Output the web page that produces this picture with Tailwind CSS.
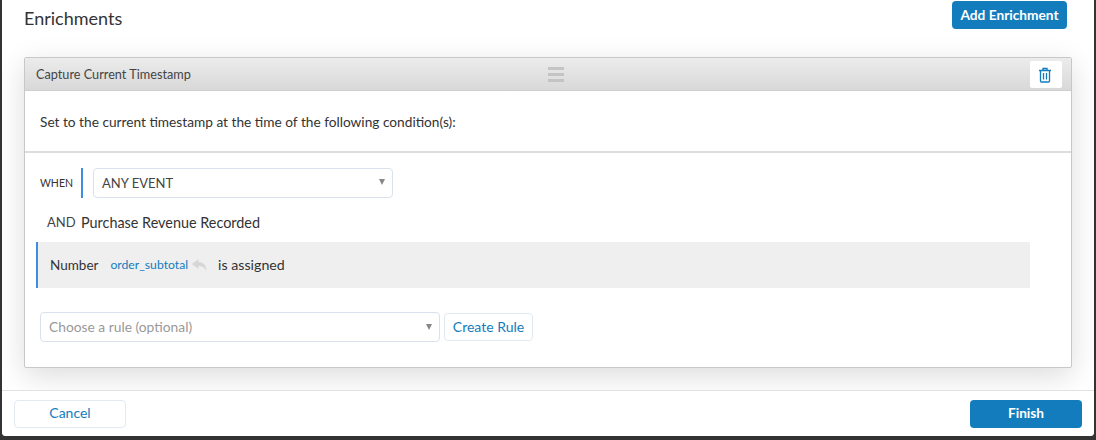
<!DOCTYPE html>
<html lang="en">
<head>
    <meta charset="UTF-8">
    <title>Enrichments</title>
    <script src="https://cdn.jsdelivr.net/npm/@tailwindcss/browser@4"></script>
</head>
<body class="w-[1096px] h-[440px] overflow-hidden bg-[#333333] font-['Lato','Liberation_Sans',sans-serif] text-[#333333]">
    <div class="ml-[2px] w-[1092px] h-[436px] bg-white rounded-b-[4px] flex flex-col overflow-hidden">
        <div class="h-[390px] flex-shrink-0 pl-[22px] pr-[22px]">
            <div class="flex justify-between h-[57px]">
                <h1 class="text-[18px] leading-[20px] mt-[8px]">Enrichments</h1>
                <button class="mt-[1px] mr-[5px] w-[115px] h-[28px] pt-[1px] bg-[#127cbd] text-white text-[13.7px] font-bold rounded-[4px]">Add Enrichment</button>
            </div>

            <section class="w-[1048px] h-[311px] border border-[#c8c8c8] rounded-[2px] bg-white shadow-[0_8px_30px_rgba(0,0,0,0.14)]">
                <header class="relative h-[33px] bg-gradient-to-b from-[#ececec] to-[#d8d8d8] border-b border-[#cfcfcf] flex items-center justify-between pl-[11px] pr-[9px]">
                    <span class="text-[12.7px] text-[#444444] mt-[2px]">Capture Current Timestamp</span>
                    <div class="absolute left-[523px] top-[9px] w-[16px] flex flex-col gap-[3px]">
                        <div class="h-[3px] bg-[#c4c4c4]"></div>
                        <div class="h-[3px] bg-[#c4c4c4]"></div>
                        <div class="h-[3px] bg-[#c4c4c4]"></div>
                    </div>
                    <button class="w-[32px] h-[27px] mt-[1px] pr-[2px] bg-white rounded-[2px] flex items-center justify-center">
                        <svg width="14" height="16" viewBox="0 0 14 16" fill="none" stroke="#127cbd" stroke-width="1.3">
                            <path d="M1 3.5h12M5 3.5V1.500h4v2M2.500 3.500v10.500a1 1 0 0 0 1 1h7a1 1 0 0 0 1-1V3.500M5.500 6v6.500M8.500 6v6.500"/>
                        </svg>
                    </button>
                </header>

                <div class="h-[62px] border-b-2 border-[#dddddd] pl-[15px] pt-[23px] text-[13.7px] leading-[16px]">Set to the current timestamp at the time of the following condition(s):</div>

                <div class="flex items-center h-[30px] mt-[15px] pl-[15px]">
                    <span class="w-[41px] pt-[1px] text-[10.5px]">WHEN</span>
                    <div class="w-[2px] h-[30px] bg-[#3b8fde]"></div>
                    <div class="relative ml-[10px] w-[300px] h-[30px] pt-[1px] border border-[#d9e2ec] rounded-[4px] flex items-center pl-[8px] text-[13px] text-[#444444]">
                        ANY EVENT
                        <div class="absolute right-[7px] top-[10px] w-0 h-0 border-x-[3px] border-x-transparent border-t-[6px] border-t-[#888888]"></div>
                    </div>
                </div>

                <div class="flex items-center mt-[17px] pl-[22px] h-[16px] text-[13px]">
                    <span class="w-[34px] text-[#444444]">AND</span>
                    <span class="text-[14.4px]">Purchase Revenue Recorded</span>
                </div>

                <div class="flex items-center ml-[11px] mt-[11px] w-[994px] h-[46px] bg-[#efefef] border-l-2 border-[#3b8fde] pl-[12px] text-[13.5px]">
                    <span>Number</span>
                    <span class="ml-[12px] text-[12.2px] text-[#127cbd]">order_subtotal</span>
                    <svg class="ml-[4px]" width="15" height="13" viewBox="0 0 15 13" fill="#d6d6d6">
                        <path d="M6.500 0 0 5 6.500 10V7c4 0 6.500 1.500 8 5.500C14.500 6.500 11.500 3 6.500 3z"/>
                    </svg>
                    <span class="ml-[11px] text-[14.2px]">is assigned</span>
                </div>

                <div class="flex items-center ml-[15px] mt-[24px]">
                    <div class="relative w-[400px] h-[30px] border border-[#d9e2ec] rounded-[4px] flex items-center pl-[8px] text-[13.8px] text-[#999999]">
                        Choose a rule (optional)
                        <div class="absolute right-[7px] top-[11px] w-0 h-0 border-x-[3px] border-x-transparent border-t-[6px] border-t-[#888888]"></div>
                    </div>
                    <button class="ml-[4px] w-[89px] h-[28px] pb-[2px] border border-[#e3e9f0] rounded-[4px] bg-white text-[14px] text-[#127cbd]">Create Rule</button>
                </div>
            </section>
        </div>

        <footer class="flex-1 border-t border-[#e2e2e2] bg-white flex items-center justify-between pl-[12px] pr-[12px]">
            <button class="w-[112px] h-[28px] pb-[2px] border border-[#e3e9f0] rounded-[4px] bg-white text-[14px] text-[#127cbd]">Cancel</button>
            <button class="w-[112px] h-[28px] rounded-[4px] bg-[#127cbd] text-white text-[13.7px] font-bold">Finish</button>
        </footer>
    </div>
</body>
</html>
